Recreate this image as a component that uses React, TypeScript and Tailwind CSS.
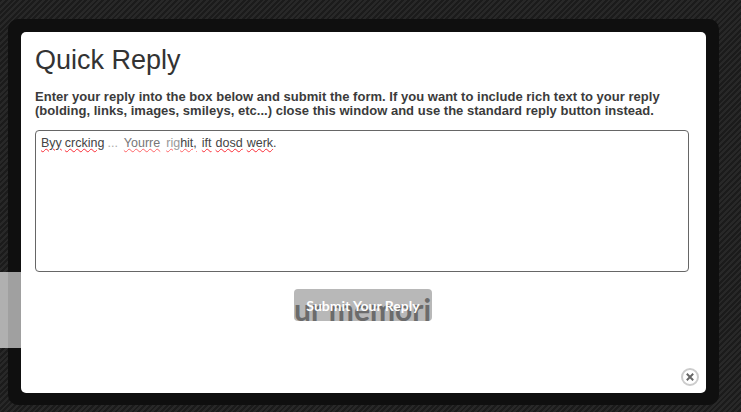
const words = [
  { text: 'Byy', faded: false },
  { text: 'crcking', faded: false },
]

const App = () => {
  return (
    <div className="relative h-[412px] w-[741px] overflow-hidden bg-[repeating-linear-gradient(135deg,#1b1b1b_0px,#1b1b1b_2px,#282828_2px,#282828_4px)] pl-2 pt-[19px] font-['Liberation_Sans',sans-serif]">
      <div className="h-[386px] w-[711px] rounded-[10px] bg-[#0f0f0f] p-[13px]">
        <div className="relative h-[361px] w-[685px] rounded-[5px] bg-white pl-3.5 pt-[11px]">
          <h1 className="text-[27px] leading-[34px] text-[#333]">Quick Reply</h1>
          <p className="mt-[13px] w-[640px] text-[13px] font-bold leading-[14px] tracking-[0.02px] text-[#3b3b3b]">
            Enter your reply into the box below and submit the form. If you want to include rich text to your reply (bolding, links, images, smileys, etc...) close this window and use the standard reply button instead.
          </p>
          <div className="mt-[12px] h-[142px] w-[654px] rounded-[4px] border border-[#666] px-[5px] pt-[5px] text-[12.5px] leading-[15px] text-[#444]">
            {words.map((w) => (
              <span key={w.text} className="mr-[3px] underline decoration-red-500 decoration-wavy decoration-1">
                {w.text}
              </span>
            ))}
            <span className="mr-[6px] text-[#aaa]">...</span>
            <span className="mr-[6px] text-[#777] underline decoration-red-400 decoration-wavy decoration-1">Yourre</span>
            <span className="underline decoration-red-400 decoration-wavy decoration-1">
              <span className="text-[#999]">rig</span>hit,
            </span>
            <span className="ml-[5px] mr-[4px] underline decoration-red-500 decoration-wavy decoration-1">ift</span>
            <span className="mr-[4px] underline decoration-red-500 decoration-wavy decoration-1">dosd</span>
            <span className="underline decoration-red-500 decoration-wavy decoration-1">werk</span>
            <span>.</span>
          </div>
          <div className="mt-[17px] flex w-[654px] justify-center">
            <button className="relative ml-[2px] h-8 w-[138px] overflow-hidden rounded-[4px] bg-[#b8b8b8] font-['Lato',sans-serif] text-[14px] font-bold text-white">
              <span className="absolute left-0 top-[4px] whitespace-nowrap text-[30px] font-bold leading-[32px] text-[#6b6b6b]">ur memori</span>
              <span className="relative">Submit Your Reply</span>
            </button>
          </div>
          <div className="absolute bottom-[7px] right-[7px] flex h-[18px] w-[18px] items-center justify-center rounded-full border-2 border-[#ccc] bg-white">
            <svg viewBox="0 0 10 10" className="h-2 w-2" stroke="#666" strokeWidth="2.4">
              <path d="M1 1 9 9M9 1 1 9" />
            </svg>
          </div>
        </div>
      </div>
      <div className="absolute left-0 top-[272px] flex h-[76px] w-[21px]">
        <div className="w-2 bg-[#b0b0b0]" />
        <div className="w-[13px] bg-[#a0a0a0]" />
      </div>
    </div>
  )
}

export default App
